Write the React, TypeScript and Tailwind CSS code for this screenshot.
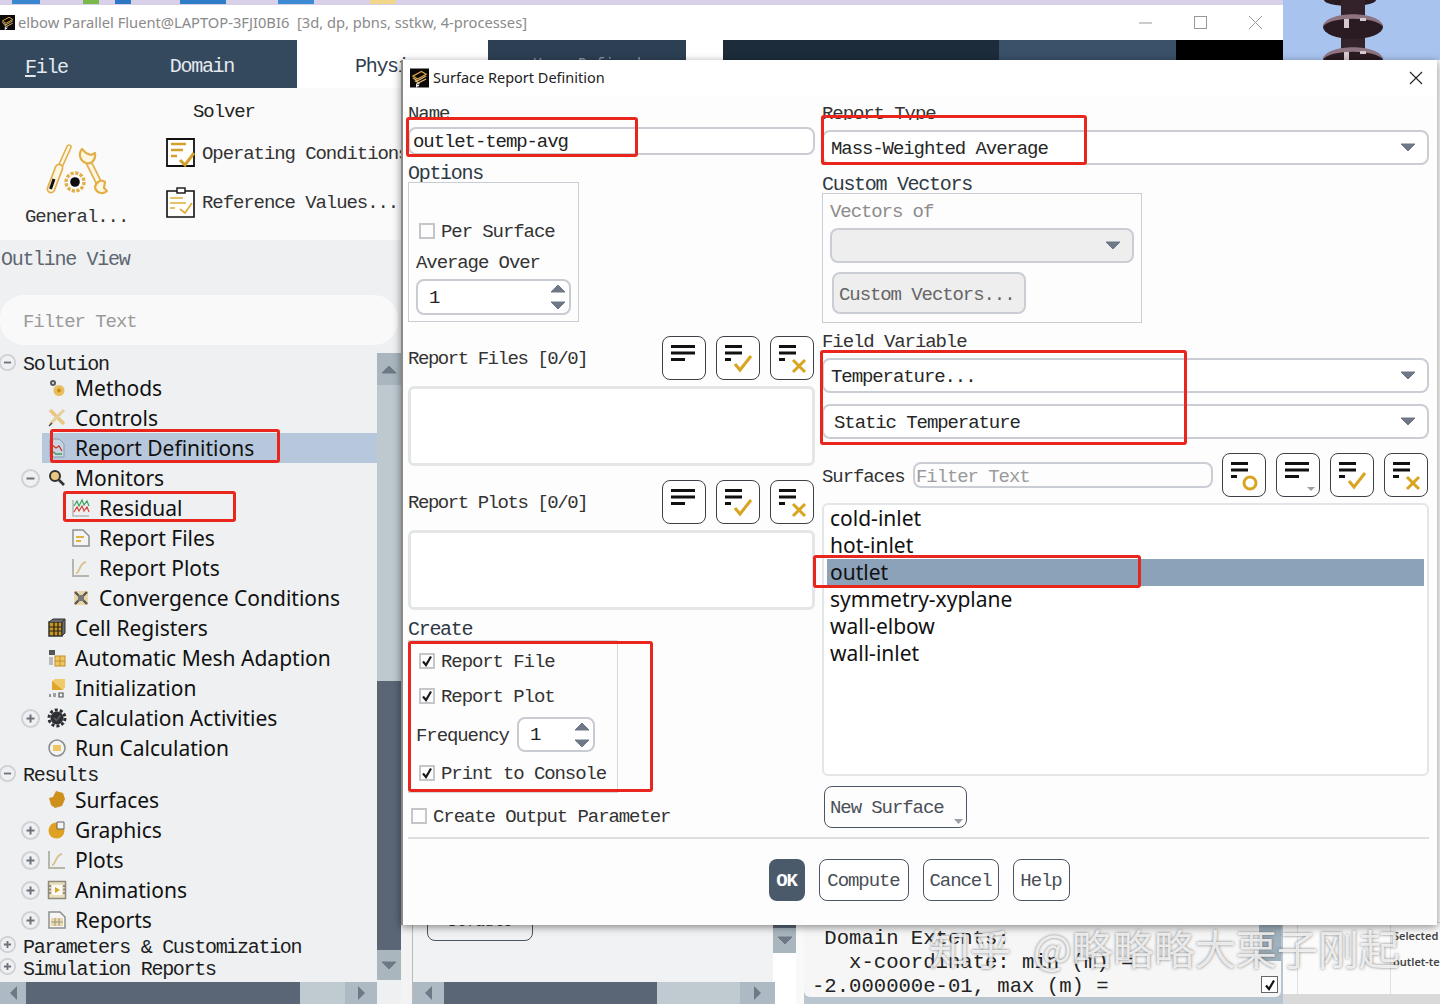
import React from "react";

const mono = "font-['Liberation_Mono',monospace]";
const sans = "font-['Noto_Sans',sans-serif]";
const body = "text-[19px] tracking-[-1.08px]";
const head = "text-[20px] tracking-[-1.3px]";
const tight = "text-[19px] tracking-[-1.45px]";

function Tri({ up = false, className = "" }: { up?: boolean; className?: string }) {
  return (
    <svg width="16" height="9" viewBox="0 0 16 9" className={className}>
      <path d={up ? "M8 1 L15 8 H1 Z" : "M1 1 H15 L8 8 Z"} fill="#6f7886" stroke="#6f7886" strokeLinejoin="round" />
    </svg>
  );
}

function FluentLogo({ w, h }: { w: number; h: number }) {
  return (
    <svg width={w} height={h} viewBox="0 0 20 20" className="shrink-0">
      <rect width="20" height="20" fill="#0c0a08" />
      <path d="M3 8 L12 3 L17 6 L8 11 Z" fill="none" stroke="#d8a24a" strokeWidth="1.3" />
      <path d="M3 10 L8 13 L17 8 M5 13 L9 15 L17 11" fill="none" stroke="#e6bd70" strokeWidth="1.2" />
      <path d="M7 16 H10 M7 16 V20 M7 18 H9.5" stroke="#fff" strokeWidth="1.2" fill="none" />
    </svg>
  );
}

function Check({ on }: { on: boolean }) {
  return (
    <span className="w-[16px] h-[16px] border-2 border-[#c4c6ca] bg-[#fdfdfd] flex items-center justify-center shrink-0">
      {on && (
        <svg width="12" height="12" viewBox="0 0 12 12">
          <path d="M2 6.5 L5 10 L10 1.5" stroke="#1a1a1a" strokeWidth="2.2" fill="none" />
        </svg>
      )}
    </span>
  );
}

function Spinner({ cls }: { cls: string }) {
  return (
    <div className={`${cls} border-2 border-[#c8ccd2] rounded-lg bg-white flex items-center justify-between pl-[11px] pr-[3px]`}>
      <span className={`${mono} ${body} text-[#222] pt-[2px]`}>1</span>
      <span className="flex flex-col gap-[8px]">
        <Tri up />
        <Tri />
      </span>
    </div>
  );
}

function Select({ text, cls = "", pl = "pl-[7px]", disabled = false }: { text: string; cls?: string; pl?: string; disabled?: boolean }) {
  return (
    <div className={`${cls} h-[35px] shrink-0 border-2 ${disabled ? "bg-[#eeeeee]" : "bg-white"} border-[#cacdd3] rounded-lg flex items-center justify-between ${pl} pr-[11px]`}>
      <span className={`${mono} ${body} text-[#262626] pt-[4px]`}>{text}</span>
      <Tri />
    </div>
  );
}

function ToolBtn({ kind }: { kind: "plain" | "drop" | "check" | "x" | "o" }) {
  return (
    <span className="w-[44px] h-[44px] shrink-0 border-[1.5px] border-[#3c4148] rounded-lg bg-white block">
      <svg width="41" height="41" viewBox="0 0 41 41" className="block">
        <rect x="8" y="8" width={kind === "plain" || kind === "drop" ? 24 : 17} height="3" fill="#111" />
        <rect x="8" y="14.5" width={kind === "plain" || kind === "drop" ? 24 : 17} height="3" fill="#111" />
        <rect x="8" y="21" width={kind === "plain" || kind === "drop" ? 14 : 6} height="3" fill="#111" />
        {kind === "drop" && <path d="M30 33 H38 L34 37 Z" fill="#9aa0a8" />}
        {kind === "check" && <path d="M18 27 L23 33 L34 19" stroke="#d9a520" strokeWidth="3" fill="none" />}
        {kind === "x" && <path d="M22 23 L34 35 M34 23 L22 35" stroke="#d9a520" strokeWidth="3" fill="none" />}
        {kind === "o" && <circle cx="27" cy="29" r="6" stroke="#d9a520" strokeWidth="3" fill="none" />}
      </svg>
    </span>
  );
}

function ListBox({ cls }: { cls: string }) {
  return <div className={`${cls} border-[3px] border-[#e3e5e7] rounded-md bg-white`} />;
}

function Btn({ text, cls }: { text: string; cls: string }) {
  return (
    <span className={`${cls} ${mono} ${body} h-[42px] border-[1.5px] border-[#4b5563] rounded-lg text-[#4a4f57] flex items-center justify-center bg-white pt-[3px]`}>
      {text}
    </span>
  );
}

function Expander({ plus }: { plus: boolean }) {
  return (
    <svg width="19" height="19" viewBox="0 0 19 19" className="shrink-0 block">
      <circle cx="9.5" cy="9.5" r="8.5" fill="#eef0f2" stroke="#cfd2d4" strokeWidth="2" />
      <path d={plus ? "M5.5 9.5 H13.5 M9.5 5.5 V13.5" : "M5.5 9.5 H13.5"} stroke="#6c727a" strokeWidth="2" />
    </svg>
  );
}

function TreeIcon({ name }: { name: string }) {
  const inner = (() => {
    switch (name) {
      case "methods":
        return (<><circle cx="6" cy="5" r="3" fill="#5a5a5a" /><circle cx="6" cy="5" r="1" fill="#eee" /><circle cx="12" cy="12.5" r="5.5" fill="#e9bd5c" /><circle cx="12" cy="12.5" r="2" fill="#c78d1b" /></>);
      case "controls":
        return (<><path d="M3 2 L17 16" stroke="#e9c77f" strokeWidth="3.5" /><path d="M17 2 L3 16" stroke="#e5cf9f" strokeWidth="3" /><path d="M2 18 L5 15" stroke="#444" strokeWidth="1.5" /></>);
      case "reportDef":
        return (<><path d="M3 1 H12 L17 6 V19 H3 Z" fill="#c9d5e2" stroke="#8c9bae" /><path d="M5 7 L9 10 L12 8 L15 13" stroke="#c0392b" fill="none" strokeWidth="1.3" /><path d="M5 13 L9 16 L15 16" stroke="#3a9a5c" fill="none" strokeWidth="1.3" /></>);
      case "monitors":
        return (<><circle cx="8" cy="8" r="5" fill="#e9c77f" stroke="#333" strokeWidth="2" /><path d="M12 12 L17 17" stroke="#333" strokeWidth="2.6" /></>);
      case "residual":
        return (<><path d="M2 2 V18 H18" stroke="#b8b8b8" strokeWidth="1.6" fill="none" /><path d="M3 8 L6 3 L8 8 L11 2 L13 7 L16 3 L18 8" stroke="#3aa55c" strokeWidth="1.2" fill="none" /><path d="M3 14 L6 9 L8 13 L11 8 L13 13 L16 9 L18 14" stroke="#d8453a" strokeWidth="1.2" fill="none" /></>);
      case "reportFiles":
        return (<><path d="M2 2 H12 L18 8 V18 H2 Z" fill="#f4f4f4" stroke="#8f8f8f" strokeWidth="1.5" /><path d="M5 9 H13" stroke="#e2b23c" strokeWidth="2" /><path d="M5 13 H10" stroke="#e2b23c" strokeWidth="2" /></>);
      case "plots":
        return (<><path d="M2 1 V18 H18" stroke="#b6b6ac" strokeWidth="2" fill="none" /><path d="M5 15 C9 15 8 5 15 4" stroke="#d8c08c" strokeWidth="1.8" fill="none" /></>);
      case "convergence":
        return (<><rect x="3" y="3" width="14" height="14" fill="#e8d6a8" /><path d="M4 4 L16 16 M16 4 L4 16" stroke="#555" strokeWidth="2.4" /><rect x="7" y="7" width="6" height="6" fill="#777" /></>);
      case "cells":
        return (<><rect x="2" y="4" width="13" height="14" fill="#c9951f" stroke="#333" strokeWidth="1.5" /><path d="M2 4 L6 1 H18 L15 4 M15 4 V18 L18 15 V1" fill="#6b6b6b" stroke="#333" /><path d="M7 4 V18 M11 4 V18 M2 9 H15 M2 13 H15" stroke="#222" strokeWidth="1.2" /></>);
      case "amr":
        return (<><rect x="2" y="2" width="6" height="5" fill="#555" /><rect x="2" y="9" width="4" height="8" fill="#bbb" /><rect x="8" y="8" width="10" height="10" fill="#eec563" stroke="#c2912a" /><path d="M13 8 V18 M8 13 H18" stroke="#c2912a" /></>);
      case "init":
        return (<><path d="M5 3 H16 V12 H5 Z" fill="#e0a52a" /><path d="M5 3 L8 1 H18 V9 L16 12" fill="#f0c96a" /><path d="M3 16 V19 M6 16 H9 M6 18 H9 M12 15 H16 V19 H12 Z" stroke="#555" strokeWidth="1.2" fill="none" /></>);
      case "calc":
        return (<><circle cx="10" cy="10" r="6.5" fill="#2d2f33" /><circle cx="10" cy="10" r="8" fill="none" stroke="#2d2f33" strokeWidth="3" strokeDasharray="3 2.03" /><path d="M7 10 L9.5 12.5 L13.5 7.5" stroke="#5a5d62" strokeWidth="1.5" fill="none" /></>);
      case "run":
        return (<><circle cx="10" cy="10" r="8" fill="#f4f4f4" stroke="#8e8e8e" strokeWidth="1.6" /><rect x="6" y="7" width="8" height="6" fill="#eec563" /></>);
      case "surfaces":
        return <path d="M9 1 L16 3 L18 9 L15 16 L8 18 L4 15 L2 8 L6 7 Z" fill="#cf8f1c" />;
      case "graphics":
        return (<><circle cx="9.5" cy="10.5" r="8" fill="#e0a021" /><path d="M10 2 H17 V9 H10 Z" fill="#f4f4f4" stroke="#666" strokeWidth="1" /></>);
      case "anim":
        return (<><rect x="1.5" y="1.5" width="17" height="17" fill="#e9dfc0" stroke="#8f8a7c" strokeWidth="1.5" /><rect x="5" y="5" width="10" height="10" fill="#fbfaf4" /><path d="M8 7 L13 10 L8 13 Z" fill="#d9a520" /><path d="M3 5 V15 M17 5 V15" stroke="#777" strokeWidth="1.5" strokeDasharray="2 1.5" /></>);
      case "reports":
        return (<><path d="M2 2 H13 L18 7 V18 H2 Z" fill="#f6f6f6" stroke="#8f8f8f" strokeWidth="1.5" /><rect x="4" y="8" width="12" height="8" fill="#ecd9a5" /><path d="M8 8 V16 M12 8 V16 M4 12 H16" stroke="#888" strokeWidth="0.8" /></>);
      default:
        return null;
    }
  })();
  return (
    <svg width="20" height="20" viewBox="0 0 20 20" className="shrink-0 block">
      {inner}
    </svg>
  );
}

type Row = { t: string; lvl: 0 | 1 | 2; ex?: "+" | "-"; ic?: string; h: string; sel?: boolean };
const rows: Row[] = [
  { t: "Solution", lvl: 0, ex: "-", h: "h-[20px]" },
  { t: "Methods", lvl: 1, ic: "methods", h: "h-[30px]" },
  { t: "Controls", lvl: 1, ic: "controls", h: "h-[30px]" },
  { t: "Report Definitions", lvl: 1, ic: "reportDef", h: "h-[30px]", sel: true },
  { t: "Monitors", lvl: 1, ex: "-", ic: "monitors", h: "h-[30px]" },
  { t: "Residual", lvl: 2, ic: "residual", h: "h-[30px]" },
  { t: "Report Files", lvl: 2, ic: "reportFiles", h: "h-[30px]" },
  { t: "Report Plots", lvl: 2, ic: "plots", h: "h-[30px]" },
  { t: "Convergence Conditions", lvl: 2, ic: "convergence", h: "h-[30px]" },
  { t: "Cell Registers", lvl: 1, ic: "cells", h: "h-[30px]" },
  { t: "Automatic Mesh Adaption", lvl: 1, ic: "amr", h: "h-[30px]" },
  { t: "Initialization", lvl: 1, ic: "init", h: "h-[30px]" },
  { t: "Calculation Activities", lvl: 1, ex: "+", ic: "calc", h: "h-[30px]" },
  { t: "Run Calculation", lvl: 1, ic: "run", h: "h-[30px]" },
  { t: "Results", lvl: 0, ex: "-", h: "h-[22px]" },
  { t: "Surfaces", lvl: 1, ic: "surfaces", h: "h-[30px]" },
  { t: "Graphics", lvl: 1, ex: "+", ic: "graphics", h: "h-[30px]" },
  { t: "Plots", lvl: 1, ex: "+", ic: "plots", h: "h-[30px]" },
  { t: "Animations", lvl: 1, ex: "+", ic: "anim", h: "h-[30px]" },
  { t: "Reports", lvl: 1, ex: "+", ic: "reports", h: "h-[30px]" },
  { t: "Parameters & Customization", lvl: 0, ex: "+", h: "h-[21px]" },
  { t: "Simulation Reports", lvl: 0, ex: "+", h: "h-[23px]" },
];

function TreeRow({ r }: { r: Row }) {
  if (r.lvl === 0) {
    return (
      <div className={`${r.h} flex items-center shrink-0`}>
        <span className="-ml-[2px] mr-[6px] scale-[0.9] -mt-[2px]"><Expander plus={r.ex === "+"} /></span>
        <span className={`${mono} ${head} text-[#1d1d1d] leading-none pt-[4px]`}>{r.t}</span>
      </div>
    );
  }
  const label = <span className={`${sans} text-[21px] text-[#111] leading-none -ml-[1px]`}>{r.t}</span>;
  if (r.sel) {
    return (
      <div className={`${r.h} flex items-stretch shrink-0 pl-[42px]`}>
        <div className="flex-1 bg-[#b7c8dc] flex items-center pl-[5px] gap-[9px]">
          <TreeIcon name={r.ic!} />
          {label}
        </div>
      </div>
    );
  }
  return (
    <div className={`${r.h} flex items-center shrink-0 ${r.lvl === 2 ? "pl-[71px]" : r.ex ? "pl-[21px]" : "pl-[47px]"} gap-[9px]`}>
      {r.lvl === 1 && r.ex && (
        <span className="-mr-[2px]"><Expander plus={r.ex === "+"} /></span>
      )}
      <TreeIcon name={r.ic!} />
      {label}
    </div>
  );
}

function HScroll({ cls, left, thumb, track, right }: { cls: string; left: string; thumb: string; track: string; right: string }) {
  return (
    <div className={`${cls} flex h-[22px] shrink-0`}>
      <div className={`${left} bg-[#adbac3] flex items-center justify-center`}>
        <svg width="9" height="14" viewBox="0 0 9 14"><path d="M8 0 L1 7 L8 14 Z" fill="#6f7886" /></svg>
      </div>
      <div className={`${thumb} bg-[#5a6576]`} />
      <div className={`${track} bg-[#c0cbd1]`} />
      <div className={`${right} bg-[#adbac3] flex items-center justify-center`}>
        <svg width="9" height="14" viewBox="0 0 9 14"><path d="M1 0 L8 7 L1 14 Z" fill="#6f7886" /></svg>
      </div>
    </div>
  );
}

function GeneralIcon() {
  return (
    <svg width="64" height="54" viewBox="0 0 64 54" className="block" fill="none" strokeLinecap="round">
      <path d="M24 4 L15 24" stroke="#e2b04a" strokeWidth="5.5" />
      <path d="M24 4 L15 24" stroke="#fdf6e2" strokeWidth="2.5" />
      <path d="M14 25 L6 46" stroke="#e2b04a" strokeWidth="9" />
      <path d="M14 25 L6 46" stroke="#fdf6e2" strokeWidth="5.5" />
      <path d="M9 36 L5.5 46" stroke="#111" strokeWidth="3" strokeLinecap="butt" />
      <circle cx="30" cy="39" r="9" stroke="#e2b04a" strokeWidth="3.4" strokeDasharray="3.2 1.5" strokeLinecap="butt" />
      <circle cx="30" cy="39" r="4.8" fill="#0d0d0d" />
      <path d="M44 20 L55 42" stroke="#e2b04a" strokeWidth="7" />
      <path d="M44 20 L55 42" stroke="#fdf6e2" strokeWidth="3.5" />
      <path d="M37 6 C33 11 35 18 41 20 C47 22 51 16 50 10 L46 12 L41 10 Z" fill="#fdf6e2" stroke="#e2b04a" strokeWidth="2.2" strokeLinejoin="round" />
      <path d="M50 44 C51 50 58 52 62 48 L59 45 L60 39 C56 36 51 39 50 44 Z" fill="#fdf6e2" stroke="#e2b04a" strokeWidth="2.2" strokeLinejoin="round" />
    </svg>
  );
}

function RibbonIcon({ clip }: { clip: boolean }) {
  return clip ? (
    <svg width="29" height="31" viewBox="0 0 29 31" className="block">
      <path d="M1 4 H28 V30 H1 Z" fill="#fff" stroke="#111" strokeWidth="1.6" />
      <rect x="11" y="1" width="8" height="5" fill="#fff" stroke="#111" strokeWidth="1.4" />
      <path d="M4 11 H17 M4 16 H20 M4 21 H9" stroke="#e0ac3a" strokeWidth="1.6" />
      <path d="M14 22 L19 26 L26 16" stroke="#e0ac3a" strokeWidth="1.8" fill="none" />
    </svg>
  ) : (
    <svg width="29" height="30" viewBox="0 0 29 30" className="block">
      <path d="M1 1 H28 V28 H1 Z" fill="#fff" stroke="#111" strokeWidth="1.8" />
      <path d="M5 6 H20 M5 12 H17 M5 18 H11" stroke="#d3a02a" strokeWidth="2.4" />
      <path d="M14 22 L19 27 L28 15" stroke="#d3a02a" strokeWidth="3" fill="none" />
    </svg>
  );
}

function DesktopStrip() {
  return (
    <svg width="1283" height="5" viewBox="0 0 1283 5" className="block">
      <rect width="1283" height="5" fill="#d8cfe9" />
      <rect x="12" width="28" height="4" fill="#3a87d0" />
      <rect x="83" width="16" height="4" fill="#79b94a" />
      <rect x="115" width="16" height="4" fill="#2c76c4" />
      <rect x="180" width="46" height="4" fill="#2f7cc9" />
      <rect x="278" width="36" height="4" fill="#3d8ad4" />
      <rect x="370" width="26" height="4" fill="#f1d68c" />
    </svg>
  );
}

function Spiral() {
  const Ring = ({ y }: { y: number }) => (
    <g>
      <ellipse cx="33" cy={y + 8} rx="30" ry="12" fill="#2a1a22" />
      <path d={`M3 ${y + 8} C4 ${y - 9} 62 ${y - 9} 63 ${y + 8} C58 ${y - 3} 8 ${y - 3} 3 ${y + 8} Z`} fill="#8d7480" />
      <rect x="24" y={y} width="5" height="9" fill="#d6c8cd" />
      <rect x="40" y={y - 1} width="6" height="3" fill="#d6c8cd" />
    </g>
  );
  return (
    <svg width="66" height="60" viewBox="0 0 66 60" className="block">
      <ellipse cx="30" cy="0" rx="26" ry="6" fill="#2a1a22" />
      <rect x="21" y="0" width="24" height="60" fill="#33222a" />
      <Ring y={19} />
      <Ring y={52} />
    </svg>
  );
}

function Annot({ cls }: { cls: string }) {
  return <div className={`absolute border-[3.5px] border-[#e8261e] rounded-[3px] pointer-events-none ${cls}`} />;
}

export default function App() {
  return (
    <div className="relative w-[1440px] h-[1004px] overflow-hidden bg-[#a8c3ee]">
      <div className="absolute left-[1283px] top-[60px] w-[157px] h-[944px] bg-[#fbfbfb] flex flex-col justify-end">
        <div className="flex h-[72px] border-t border-[#d8d8d8] overflow-hidden">
          <div className="w-[15px] border-r border-[#e0e0e0]" />
          <div className="w-[93px] border-r border-[#e0e0e0]" />
          <div className={`${sans} flex-1 text-[11px] leading-[26px] text-[#444] font-semibold whitespace-nowrap pl-[2px]`}>
            <div>Selected</div>
            <div>outlet-te</div>
          </div>
        </div>
        <div className="h-[10px] bg-[#d9d9d9]" />
      </div>
      <div className="absolute left-[1320px] top-0"><Spiral /></div>

      <div className="absolute left-0 top-0 w-[1283px] h-[1004px] flex flex-col">
        <DesktopStrip />
        <div className="h-[35px] bg-white flex items-center shrink-0">
          <FluentLogo w={15} h={19} />
          <span className={`${sans} text-[14.7px] text-[#8a8a8a] ml-[3px] whitespace-pre`}>elbow Parallel Fluent@LAPTOP-3FJI0BI6  [3d, dp, pbns, sstkw, 4-processes]</span>
          <div className="ml-auto flex items-center gap-[42px] pr-[21px]">
            <svg width="13" height="13" viewBox="0 0 13 13"><path d="M0 7 H13" stroke="#999" /></svg>
            <svg width="13" height="13" viewBox="0 0 13 13"><rect x="0.5" y="0.5" width="12" height="12" fill="none" stroke="#999" /></svg>
            <svg width="13" height="13" viewBox="0 0 13 13"><path d="M0 0 L13 13 M13 0 L0 13" stroke="#999" /></svg>
          </div>
        </div>
        <div className="h-[48px] flex shrink-0 bg-white">
          <div className="w-[297px] bg-[#34495e] flex items-center pt-[8px]">
            <span className={`${mono} ${head} text-[#e4e9ef] ml-[25px]`}><u className="underline-offset-2">F</u>ile</span>
            <span className={`${mono} ${head} text-[#e4e9ef] ml-[102px] -mt-[2px]`}>Domain</span>
          </div>
          <div className="w-[191px] pt-[12px] pl-[58px]">
            <span className={`${mono} ${head} text-[#2e3d4f]`}>Physics</span>
          </div>
          <div className="w-[198px] bg-[#2c3f53] flex items-start justify-center pt-[14px]">
            <span className={`${mono} text-[15px] text-[#8d9aa8]`}>User Defined</span>
          </div>
          <div className="w-[37px]" />
          <div className="w-[276px] bg-[#1c2c3b] pl-[56px] pt-[16px]">
            <span className={`${mono} text-[14px] text-[#8d9aa8]`}>Quick S</span>
          </div>
          <div className="w-[177px] bg-[#3a5169]" />
          <div className="flex-1 bg-black" />
        </div>
        <div className="h-[152px] bg-[#fafafa] shrink-0 pt-[14px] relative">
          <div className={`${mono} ${body} leading-[20px] text-[#222] pl-[193px]`}>Solver</div>
          <div className="flex mt-[10px]">
            <div className="w-[166px] flex flex-col items-start pt-[11px]">
              <div className="ml-[45px]"><GeneralIcon /></div>
              <span className={`${mono} ${body} leading-[20px] text-[#333] ml-[25px] mt-[10px]`}>General...</span>
            </div>
            <div className="flex flex-col">
              <div className="flex items-center gap-[7px] h-[34px] mt-[4px]">
                <RibbonIcon clip={false} />
                <span className={`${mono} ${body} text-[#333] whitespace-nowrap pt-[3px]`}>Operating Conditions...</span>
              </div>
              <div className="flex items-center gap-[7px] h-[34px] mt-[15px]">
                <RibbonIcon clip />
                <span className={`${mono} ${body} text-[#333] whitespace-nowrap pt-[3px]`}>Reference Values...</span>
              </div>
            </div>
          </div>
        </div>
        <div className="flex-1 flex min-h-0">
          <div className="w-[401px] bg-[#eef0f2] flex flex-col shrink-0">
            <div className="h-[55px] shrink-0 flex items-start pt-[10px] pl-[1px]">
              <span className={`${mono} ${head} leading-[20px] text-[#5c6670]`}>Outline View</span>
            </div>
            <div className="h-[50px] shrink-0 mr-[3px] rounded-[24px] bg-[#f9f9f9] flex items-center pl-[23px]">
              <span className={`${mono} ${body} text-[#9a9a9a] pt-[5px]`}>Filter Text</span>
            </div>
            <div className="h-[8px] shrink-0" />
            <div className="flex-1 flex min-h-0">
              <div className="w-[377px] flex flex-col shrink-0 overflow-hidden">
                {rows.map((r) => (
                  <TreeRow key={r.t} r={r} />
                ))}
              </div>
              <div className="w-[24px] flex flex-col shrink-0">
                <div className="h-[32px] bg-[#a9b6be] flex items-center justify-center"><Tri up /></div>
                <div className="h-[296px] bg-[#bec9cf]" />
                <div className="h-[269px] bg-[#5a6576]" />
                <div className="h-[30px] bg-[#a9b6be] flex items-center justify-center"><Tri /></div>
              </div>
            </div>
            <div className="flex h-[22px] shrink-0">
              <HScroll cls="w-[377px]" left="w-[26px]" thumb="w-[274px]" track="w-[45px]" right="w-[32px]" />
            </div>
          </div>
          <div className="w-[12px] bg-[#f3f3f3] border-r border-[#b9b9b9] shrink-0" />
          <div className="w-[383px] flex flex-col shrink-0 bg-white">
            <div className="flex-1 flex min-h-0">
              <div className="w-[360px] bg-[#f1f2f3] flex flex-col justify-end pl-[14px] pb-[41px]">
                <div className={`${mono} w-[106px] h-[36px] border-[1.5px] border-[#4b5563] rounded-lg text-[15px] text-[#333] flex items-center justify-center`}>Default</div>
              </div>
              <div className="w-[23px] flex flex-col">
                <div className="flex-1 bg-[#5a6576]" />
                <div className="h-[25px] bg-[#a9b6be] flex items-center justify-center"><Tri /></div>
                <div className="h-[29px] bg-white" />
              </div>
            </div>
            <HScroll cls="w-[362px]" left="w-[31px]" thumb="w-[213px]" track="w-[83px]" right="w-[35px]" />
          </div>
          <div className="w-[8px] bg-[#f9f9f9] shrink-0" />
          <div className="flex-1 flex flex-col justify-end min-w-0 bg-[#b9c6cf]">
            <div className="relative bg-[#f6f6f6] rounded-b-md h-[72px] mb-[7px] mr-[2px] flex flex-col overflow-hidden pl-[8px] pt-[2px]">
              <div className={`${mono} text-[20.6px] text-[#222] leading-[24px] whitespace-pre`}>
                <div>{" Domain Extents:"}</div>
                <div>{"   x-coordinate: min (m) ="}</div>
                <div>{"-2.000000e-01, max (m) ="}</div>
              </div>
              <div className="absolute right-[3px] bottom-[4px]">
                <span className="w-[17px] h-[17px] border border-[#666] bg-white flex items-center justify-center">
                  <svg width="12" height="12" viewBox="0 0 12 12"><path d="M2 6.5 L5 10 L10 1.5" stroke="#111" strokeWidth="2.2" fill="none" /></svg>
                </span>
              </div>
              <div className="absolute right-[0px] top-0 w-[22px] h-[36px] bg-[#9fb1bd]" />
            </div>
          </div>
        </div>
      </div>

      <div className="absolute left-[401px] top-[60px] w-[1036px] h-[865px] bg-[#fdfdfd] border-l-2 border-[#8a8a8a] flex flex-col shadow-[0_2px_8px_rgba(0,0,0,0.45)]">
        <div className="h-[36px] shrink-0 bg-white flex items-center pl-[7px] pr-[14px] gap-[4px] pb-[1px]">
          <FluentLogo w={19} h={20} />
          <span className={`${sans} text-[14.5px] text-[#222]`}>Surface Report Definition</span>
          <svg width="14" height="14" viewBox="0 0 14 14" className="ml-auto">
            <path d="M1 1 L13 13 M13 1 L1 13" stroke="#222" strokeWidth="1.1" />
          </svg>
        </div>
        <div className="h-[741px] flex pl-[5px] gap-[7px] shrink-0">
          <div className="w-[407px] flex flex-col shrink-0">
            <div className="h-[31px] shrink-0 pt-[8px]">
              <div className={`${mono} ${body} leading-[20px] text-[#333] h-[14px] overflow-hidden`}>Name</div>
            </div>
            <div className={`${mono} ${body} h-[28px] shrink-0 border-2 border-[#cacdd3] rounded-lg flex items-center pl-[3px] text-[#222] pt-[3px] bg-white`}>outlet-temp-avg</div>
            <div className={`${mono} ${head} h-[27px] shrink-0 flex items-end leading-[16px] text-[#2f3a45]`}>Options</div>
            <div className="h-[140px] w-[171px] shrink-0 border border-[#c9cdd4] flex flex-col pl-[7px] pt-[38px]">
              <label className="flex items-center gap-[6px] h-[20px] ml-[3px]">
                <Check on={false} />
                <span className={`${mono} ${body} text-[#333] pt-[3px]`}>Per Surface</span>
              </label>
              <div className={`${mono} ${body} leading-[20px] text-[#333] mt-[12px]`}>Average Over</div>
              <Spinner cls="w-[155px] h-[36px] mt-[6px]" />
            </div>
            <div className="h-[58px] shrink-0 flex items-start pt-[14px]">
              <span className={`${mono} ${tight} leading-[46px] text-[#333]`}>Report Files [0/0]</span>
              <div className="ml-auto flex gap-[10px] pr-[1px]">
                <ToolBtn kind="plain" /><ToolBtn kind="check" /><ToolBtn kind="x" />
              </div>
            </div>
            <ListBox cls="h-[80px] mt-[6px] shrink-0" />
            <div className="h-[44px] shrink-0 flex items-start mt-[14px]">
              <span className={`${mono} ${tight} leading-[46px] text-[#333]`}>Report Plots [0/0]</span>
              <div className="ml-auto flex gap-[10px] pr-[1px]">
                <ToolBtn kind="plain" /><ToolBtn kind="check" /><ToolBtn kind="x" />
              </div>
            </div>
            <ListBox cls="h-[80px] mt-[6px] shrink-0" />
            <div className={`${mono} ${head} h-[28px] shrink-0 flex items-end leading-[16px] text-[#2f3a45]`}>Create</div>
            <div className="w-[210px] h-[153px] mt-[2px] shrink-0 border border-[#d6d8db] flex flex-col pl-[7px] pt-[10px]">
              <label className="flex items-center gap-[6px] h-[20px] ml-[3px]">
                <Check on />
                <span className={`${mono} ${body} text-[#333] pt-[3px]`}>Report File</span>
              </label>
              <label className="flex items-center gap-[6px] h-[20px] ml-[3px] mt-[15px]">
                <Check on />
                <span className={`${mono} ${body} text-[#333] pt-[3px]`}>Report Plot</span>
              </label>
              <div className="flex items-center h-[35px] mt-[11px] gap-[8px]">
                <span className={`${mono} ${body} text-[#333] pt-[3px]`}>Frequency</span>
                <Spinner cls="w-[78px] h-[35px]" />
              </div>
              <label className="flex items-center gap-[6px] h-[20px] ml-[3px] mt-[11px]">
                <Check on />
                <span className={`${mono} ${body} text-[#333] pt-[3px]`}>Print to Console</span>
              </label>
            </div>
            <label className="flex items-center gap-[6px] h-[20px] ml-[3px] mt-[13px] shrink-0">
              <Check on={false} />
              <span className={`${mono} ${body} text-[#333] pt-[3px]`}>Create Output Parameter</span>
            </label>
          </div>
          <div className="w-[607px] flex flex-col shrink-0">
            <div className="h-[34px] shrink-0 pt-[8px]">
              <div className={`${mono} ${body} leading-[20px] text-[#333] h-[16px] overflow-hidden`}>Report Type</div>
            </div>
            <Select text="Mass-Weighted Average" />
            <div className={`${mono} ${head} h-[28px] shrink-0 flex items-end leading-[16px] text-[#2f3a45]`}>Custom Vectors</div>
            <div className="h-[130px] w-[320px] shrink-0 border border-[#c9cdd4] flex flex-col pl-[7px] pt-[8px]">
              <div className={`${mono} ${body} leading-[20px] text-[#8c8c8c]`}>Vectors of</div>
              <Select text="" cls="w-[304px] mt-[6px]" disabled />
              <div className={`${mono} ${body} w-[194px] h-[42px] mt-[9px] ml-[2px] shrink-0 rounded-lg border-2 border-[#cacdd3] bg-[#eeeeee] text-[#666] flex items-center pl-[5px] pt-[4px]`}>Custom Vectors...</div>
            </div>
            <div className={`${mono} ${body} h-[35px] shrink-0 pt-[9px] leading-[20px] text-[#333]`}>Field Variable</div>
            <Select text="Temperature..." />
            <Select text="Static Temperature" cls="mt-[11px]" pl="pl-[10px]" />
            <div className="h-[44px] mt-[14px] shrink-0 flex items-center">
              <span className={`${mono} ${body} text-[#333] w-[91px] pt-[4px]`}>Surfaces</span>
              <div className={`${mono} ${body} w-[300px] h-[26px] border-2 border-[#cacdd3] rounded-lg text-[#9a9a9a] flex items-center pl-[1px] pt-[4px]`}>Filter Text</div>
              <div className="ml-[9px] flex gap-[10px]">
                <ToolBtn kind="o" /><ToolBtn kind="drop" /><ToolBtn kind="check" /><ToolBtn kind="x" />
              </div>
            </div>
            <div className="h-[273px] mt-[6px] shrink-0 border-2 border-[#e3e5e7] rounded-md bg-white flex flex-col px-[3px]">
              {["cold-inlet", "hot-inlet", "outlet", "symmetry-xyplane", "wall-elbow", "wall-inlet"].map((s) => (
                <div key={s} className={`${sans} h-[27px] shrink-0 flex items-center pl-[3px] pb-[1px] text-[21px] leading-none text-[#111] ${s === "outlet" ? "bg-[#8ba2b9]" : ""}`}>{s}</div>
              ))}
            </div>
            <div className={`${mono} ${body} relative w-[143px] h-[42px] mt-[10px] ml-[2px] shrink-0 border-[1.5px] border-[#4b5563] rounded-lg text-[#4a4f57] flex items-center pl-[5px] pt-[3px]`}>
              New Surface
              <svg width="9" height="5" viewBox="0 0 9 5" className="absolute right-[3px] bottom-[3px]"><path d="M0 0 H9 L4.5 5 Z" fill="#9aa0a8" /></svg>
            </div>
          </div>
        </div>
        <div className="h-[2px] shrink-0 bg-[#dcdee0] ml-[5px] mr-[8px]" />
        <div className="mt-[20px] flex justify-center gap-[14px] pr-[2px]">
          <span className={`${mono} ${body} w-[36px] h-[42px] rounded-lg bg-[#4b5a6b] text-white font-bold flex items-center justify-center pt-[3px]`}>OK</span>
          <Btn text="Compute" cls="w-[90px]" />
          <Btn text="Cancel" cls="w-[76px]" />
          <Btn text="Help" cls="w-[57px]" />
        </div>
      </div>

      <Annot cls="left-[406px] top-[117px] w-[232px] h-[40px]" />
      <Annot cls="left-[821px] top-[115px] w-[266px] h-[50px]" />
      <Annot cls="left-[820px] top-[350px] w-[367px] h-[95px]" />
      <Annot cls="left-[813px] top-[555px] w-[328px] h-[33px]" />
      <Annot cls="left-[408px] top-[641px] w-[245px] h-[151px]" />
      <Annot cls="left-[50px] top-[429px] w-[230px] h-[34px]" />
      <Annot cls="left-[63px] top-[491px] w-[173px] h-[31px]" />

      <div className="absolute left-[929px] top-[917px] text-[41px] leading-[60px] text-white/80 whitespace-pre [text-shadow:0_0_3px_rgba(60,60,60,0.7)] font-['Noto_Sans_CJK_SC','Noto_Sans',sans-serif]">知乎<span className="ml-[22px]">@略略略大栗子刚起</span></div>
    </div>
  );
}
